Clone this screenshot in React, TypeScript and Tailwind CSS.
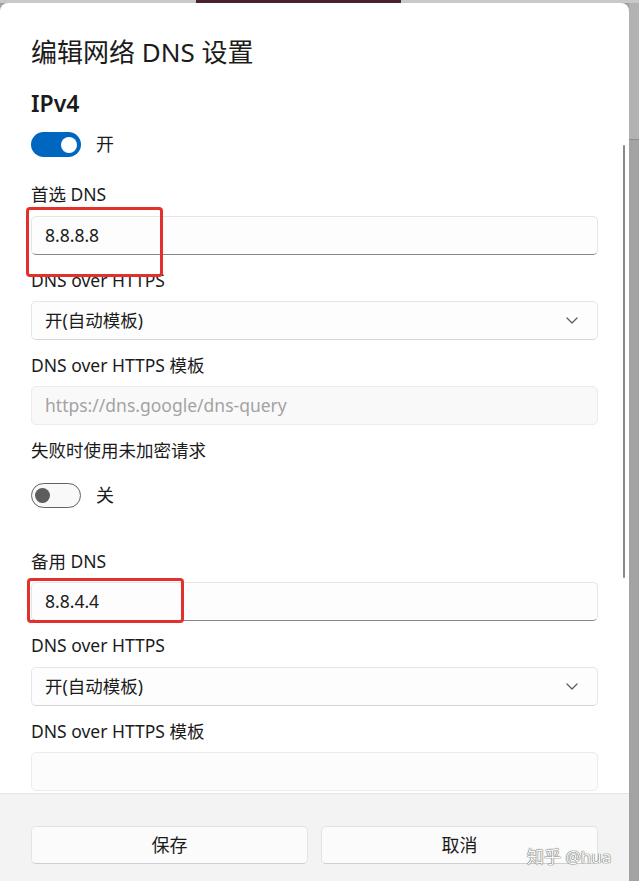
import React from "react";

const font = { fontFamily: '"Noto Sans", "Noto Sans CJK SC", sans-serif' };

function Label({ text, className = "" }: { text: string; className?: string }) {
  return <div className={`h-[24px] leading-[24px] text-[17.5px] text-[#1b1b1b] ${className}`}>{text}</div>;
}

function TextBox({ value, className = "", mark }: { value: string; className?: string; mark?: string }) {
  return (
    <div className={`relative h-[39px] rounded-[5px] border border-[#e5e5e5] border-b-[#878787] bg-[#fdfdfd] flex items-center pl-[13px] text-[17.5px] text-[#1b1b1b] ${className}`}>
      {value}
      {mark && <div className={`absolute rounded-[4px] border-[3px] border-[#e2302c] ${mark}`} />}
    </div>
  );
}

function Select({ value, className = "" }: { value: string; className?: string }) {
  return (
    <div className={`h-[39px] rounded-[5px] border border-[#e6e6e6] border-b-[#d6d6d6] bg-[#fdfdfd] flex items-center justify-between pl-[13px] pr-[19px] text-[17.5px] text-[#1b1b1b] ${className}`}>
      <span>{value}</span>
      <svg width="12" height="7" viewBox="0 0 12 7" fill="none">
        <path d="M1 1l5 5 5-5" stroke="#5c5c5c" strokeWidth="1.3" strokeLinecap="round" strokeLinejoin="round" />
      </svg>
    </div>
  );
}

function Toggle({ on, label, className = "" }: { on: boolean; label: string; className?: string }) {
  return (
    <div className={`h-[25px] flex items-center gap-[15px] ${className}`}>
      {on ? (
        <div className="w-[50px] h-[25px] rounded-full bg-[#0067c0] flex items-center justify-end pr-[4px]">
          <div className="w-[16px] h-[16px] rounded-full bg-white" />
        </div>
      ) : (
        <div className="w-[50px] h-[25px] rounded-full border border-[#616161] bg-[#f9f9f9] flex items-center pl-[3px]">
          <div className="w-[15px] h-[15px] rounded-full bg-[#5d5d5d]" />
        </div>
      )}
      <span className="leading-[25px] text-[18px] text-[#1b1b1b]">{label}</span>
    </div>
  );
}

export default function App() {
  return (
    <div className="w-[639px] h-[881px] flex flex-col bg-[#a0a0a0] overflow-hidden" style={font}>
      <div className="h-[3px] flex shrink-0">
        <div className="w-[196px] bg-[#c9c9c9]" />
        <div className="w-[205px] bg-[#4b2232]" />
        <div className="flex-1 bg-[#c9c9c9]" />
      </div>
      <div className="flex-1 flex min-h-0">
        <div className="w-[629px] flex flex-col bg-white rounded-t-[8px] overflow-hidden">
          <div className="relative h-[790px] overflow-hidden px-[31px] pt-[32px]">
            <div className="h-[34px] leading-[34px] text-[26px] text-[#1b1b1b]">编辑网络 DNS 设置</div>
            <div className="mt-[18px] h-[32px] leading-[32px] text-[23px] font-semibold text-[#1b1b1b]">IPv4</div>
            <Toggle on label="开" className="mt-[13px]" />

            <Label text="首选 DNS" className="mt-[25px]" />
            <TextBox value="8.8.8.8" className="mt-[10px] z-10" mark="left-[-6px] top-[-10px] w-[137px] h-[70px]" />
            <Label text="DNS over HTTPS" className="mt-[13px]" />
            <Select value="开(自动模板)" className="mt-[9px]" />
            <Label text="DNS over HTTPS 模板" className="mt-[13px]" />
            <div className="mt-[9px] h-[39px] rounded-[5px] border border-[#ececec] bg-[#f9f9f9] flex items-center pl-[13px] text-[17.5px] text-[#a3a3a3]">
              https://dns.google/dns-query
            </div>
            <Label text="失败时使用未加密请求" className="mt-[13px]" />
            <Toggle on={false} label="关" className="mt-[21px]" />

            <Label text="备用 DNS" className="mt-[41px]" />
            <TextBox value="8.8.4.4" className="mt-[9px]" mark="left-[-5px] top-[-5px] w-[157px] h-[45px]" />
            <Label text="DNS over HTTPS" className="mt-[12px]" />
            <Select value="开(自动模板)" className="mt-[10px]" />
            <Label text="DNS over HTTPS 模板" className="mt-[13px]" />
            <div className="mt-[9px] h-[39px] rounded-[5px] border border-[#ececec] bg-[#fcfcfc]" />

            <div className="absolute left-[623px] top-[142px] w-[2px] h-[433px] rounded-full bg-[#8a8a8a]" />
          </div>
          <div className="relative flex-1 bg-[#f3f3f3] border-t border-[#e5e5e5] flex gap-[13px] px-[31px] pt-[32px]">
            <button className="w-[277px] h-[38px] rounded-[5px] border border-[#e3e3e3] border-b-[#cfcfcf] bg-[#fbfbfb] text-[18px] text-[#1b1b1b]">保存</button>
            <button className="w-[277px] h-[38px] rounded-[5px] border border-[#e3e3e3] border-b-[#cfcfcf] bg-[#fbfbfb] text-[18px] text-[#1b1b1b]">取消</button>
            <div className="absolute left-[527px] top-[50px] text-[17px] text-[#fafafa] [text-shadow:0_0_1px_#6e6e6e,0_0_1px_#6e6e6e,0_0_1px_#6e6e6e]">知乎 @hua</div>
          </div>
        </div>
        <div className="flex-1 flex flex-col">
          <div className="h-[137px] bg-[#b2b2b2] border-b border-[#8c8c8c]" />
          <div className="flex-1 bg-[#a3a3a3]" />
        </div>
      </div>
    </div>
  );
}
